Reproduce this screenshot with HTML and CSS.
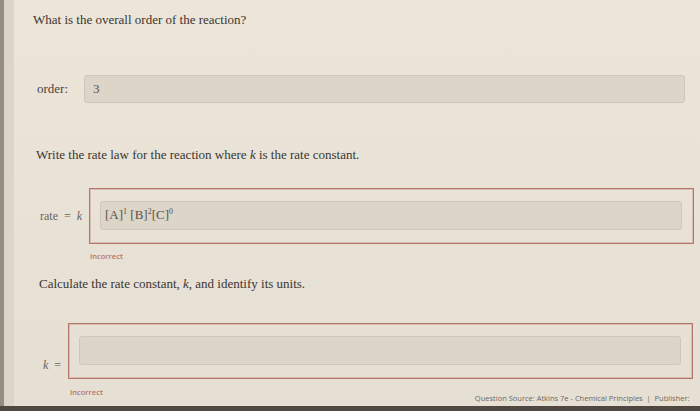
FILE: index.html
```html
<!DOCTYPE html>
<html lang="en">
<head>
  <meta charset="UTF-8">
  <meta name="viewport" content="width=device-width, initial-scale=1">
  <title>Rate Law Question</title>
  <link rel="stylesheet" href="styles.css">
</head>
<body>

<div class="screen">
  <div class="page">
    <p class="question q1">What is the overall order of the reaction?</p>

    <div class="answer-row order-row">
      <span class="label">order:</span>
      <div class="field">3</div>
    </div>

    <p class="question q2">Write the rate law for the reaction where <i>k</i> is the rate constant.</p>

    <div class="answer-row rate-row">
      <span class="label math">rate<span class="eq">=</span><i>k</i></span>
      <div class="wrong-box">
        <div class="field">[A]<sup>1</sup> [B]<sup>2</sup>[C]<sup>0</sup></div>
      </div>
    </div>
    <p class="feedback rate-feedback">Incorrect</p>

    <p class="question q3">Calculate the rate constant, <i>k</i>, and identify its units.</p>

    <div class="answer-row k-row">
      <span class="label math"><i>k</i><span class="eq">=</span></span>
      <div class="wrong-box">
        <div class="field"></div>
      </div>
    </div>

    <div class="bottom-row">
      <p class="feedback k-feedback">Incorrect</p>
      <p class="source">Question Source: Atkins 7e - Chemical Principles &nbsp;|&nbsp; Publisher:</p>
    </div>
  </div>
  <div class="taskbar"></div>
</div>

</body>
</html>
```

FILE: styles.css
```css
html, body {
  margin: 0;
  padding: 0;
  height: 411px;
  overflow: hidden;
}

body {
  background-color: #e9e2d5;
  font-family: 'Liberation Serif', 'Times New Roman', serif;
  color: #3a3632;
}

.screen {
  display: flex;
  flex-direction: column;
  height: 411px;
  border-left: 4px solid #958c83;
}

.page {
  flex: 1;
  border-left: 10px solid #dcd5ca;
  padding-left: 19px;
  background: linear-gradient(to bottom, #ece5d8, #e8e1d5 60%, #e6dfd3);
}

.question {
  margin: 0;
  font-size: 13px;
  line-height: 16px;
  white-space: nowrap;
}

.q1 {
  padding-top: 12px;
}

.q2 {
  margin-top: 44px;
  padding-left: 3px;
}

.q3 {
  margin-top: 15px;
  padding-left: 6px;
}

.answer-row {
  display: flex;
  align-items: center;
}

.label {
  font-size: 13px;
  color: #4a4540;
  white-space: nowrap;
}

.label.math {
  font-size: 12px;
  color: #6b6560;
}

.label .eq {
  margin: 0 6px;
}

.field {
  flex: 1;
  height: 27px;
  box-sizing: border-box;
  background-color: #ddd5c8;
  border: 1px solid #cfc7ba;
  border-radius: 3px;
  padding: 4px 8px;
  font-size: 13px;
  line-height: 18px;
  color: #57524c;
}

.field sup {
  font-size: 8px;
  line-height: 0;
}

.order-row {
  margin-top: 47px;
  margin-right: 15px;
  padding-left: 4px;
}

.order-row .label {
  width: 47px;
}

.order-row .field {
  height: 28px;
}

.wrong-box {
  flex: 1;
  display: flex;
  border: 1px solid #b5756b;
  box-shadow: inset 0 0 0 1px rgba(185, 122, 112, 0.35);
  padding: 12px 11px 13px 10px;
}

.rate-row {
  margin-top: 25px;
  margin-right: 6px;
  padding-left: 7px;
}

.rate-row .label {
  width: 49px;
}

.rate-row .field {
  height: 29px;
  padding-left: 4px;
}

.feedback {
  margin: 0;
  font-family: 'Open Sans', 'Liberation Sans', sans-serif;
  font-size: 7.5px;
  line-height: 10px;
  font-weight: 600;
  color: #b5766c;
}

.rate-feedback {
  margin-top: 7px;
  padding-left: 57px;
}

.k-row {
  margin-top: 31px;
  margin-right: 7px;
  padding-left: 10px;
  align-items: stretch;
}

.k-row .label {
  width: 25px;
  align-self: flex-end;
  padding-bottom: 6px;
}

.k-row .label .eq {
  margin-right: 0;
}

.k-row .field {
  height: 29px;
}

.bottom-row {
  display: flex;
  margin-top: 8px;
  white-space: nowrap;
}

.k-feedback {
  padding-left: 37px;
}

.source {
  margin: 0 0 0 372px;
  padding-top: 6px;
  font-family: 'Open Sans', 'Liberation Sans', sans-serif;
  font-size: 7.5px;
  line-height: 10px;
  color: #6e6861;
}

.taskbar {
  height: 5px;
  margin-left: -4px;
  background-color: #4f4740;
}
```
